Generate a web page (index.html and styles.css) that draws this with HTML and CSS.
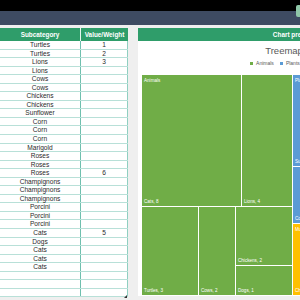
FILE: index.html
```html
<!DOCTYPE html>
<html>
<head>
<meta charset="utf-8">
<link rel="stylesheet" href="styles.css">
</head>
<body>
<div class="topbar"></div>
<div class="navbar"><div class="nav-btn"></div></div>
<div class="main">
  <div class="sheet">
    <div class="grid-head">
      <div class="c1">Subcategory</div>
      <div class="c2">Value/Weight</div>
    </div>
    <div class="grid-body">
      <div class="r"><div>Turtles</div><div>1</div></div>
      <div class="r"><div>Turtles</div><div>2</div></div>
      <div class="r"><div>Lions</div><div>3</div></div>
      <div class="r"><div>Lions</div><div></div></div>
      <div class="r"><div>Cows</div><div></div></div>
      <div class="r"><div>Cows</div><div></div></div>
      <div class="r"><div>Chickens</div><div></div></div>
      <div class="r"><div>Chickens</div><div></div></div>
      <div class="r"><div>Sunflower</div><div></div></div>
      <div class="r"><div>Corn</div><div></div></div>
      <div class="r"><div>Corn</div><div></div></div>
      <div class="r"><div>Corn</div><div></div></div>
      <div class="r"><div>Marigold</div><div></div></div>
      <div class="r"><div>Roses</div><div></div></div>
      <div class="r"><div>Roses</div><div></div></div>
      <div class="r"><div>Roses</div><div>6</div></div>
      <div class="r"><div>Champignons</div><div></div></div>
      <div class="r"><div>Champignons</div><div></div></div>
      <div class="r"><div>Champignons</div><div></div></div>
      <div class="r"><div>Porcini</div><div></div></div>
      <div class="r"><div>Porcini</div><div></div></div>
      <div class="r"><div>Porcini</div><div></div></div>
      <div class="r"><div>Cats</div><div>5</div></div>
      <div class="r"><div>Dogs</div><div></div></div>
      <div class="r"><div>Cats</div><div></div></div>
      <div class="r"><div>Cats</div><div></div></div>
      <div class="r"><div>Cats</div><div></div></div>
      <div class="r"><div></div><div></div></div>
      <div class="r"><div></div><div></div></div>
      <div class="r"><div></div><div></div></div>
    </div>
    <span class="resize"></span>
  </div>
  <div class="splitter"></div>
  <div class="panel">
    <div class="panel-head">Chart preview</div>
    <div class="panel-body">
      <div class="chart-title">Treemap Chart</div>
      <div class="legend">
        <span class="lg"><i class="sw sw-green"></i>Animals</span>
        <span class="lg"><i class="sw sw-blue"></i>Plants</span>
        <span class="lg"><i class="sw sw-yellow"></i>Mushrooms</span>
      </div>
      <div class="treemap">
        <div class="group animals">
          <div class="row top">
            <div class="tile cats"><span class="hdr">Animals</span><span class="lbl">Cats, 8</span></div>
            <div class="tile lions"><span class="lbl">Lions, 4</span></div>
          </div>
          <div class="row bottom">
            <div class="tile turtles"><span class="lbl">Turtles, 3</span></div>
            <div class="tile cows"><span class="lbl">Cows, 2</span></div>
            <div class="col">
              <div class="tile chickens"><span class="lbl">Chickens, 2</span></div>
              <div class="tile dogs"><span class="lbl">Dogs, 1</span></div>
            </div>
          </div>
        </div>
        <div class="group side">
          <div class="plants">
            <div class="tile blue roses"><span class="hdr">Plants</span><span class="lbl">Sunflower, 1</span></div>
            <div class="tile blue corn"><span class="lbl">Corn, 3</span></div>
          </div>
          <div class="tile yellow mush"><span class="hdr">Mushrooms</span><span class="lbl">Champignons, 3</span></div>
        </div>
      </div>
    </div>
  </div>
</div>
</body>
</html>
```
FILE: styles.css
```css
html, body {
  margin: 0;
  padding: 0;
}
body {
  width: 300px;
  height: 300px;
  overflow: hidden;
  background: #efefef;
  font-family: "Liberation Sans", Arial, sans-serif;
}
.topbar {
  height: 11px;
  background: #000;
}
.navbar {
  height: 14px;
  background: #3e4b62;
  position: relative;
}
.nav-btn {
  position: absolute;
  left: 296px;
  top: -6px;
  width: 20px;
  height: 12px;
  background: #8fc7a8;
  border-radius: 2px;
}
.main {
  display: flex;
  align-items: flex-start;
  padding-top: 3px;
}
.sheet {
  position: relative;
  width: 128px;
  flex: none;
  background: #fff;
}
.grid-head {
  display: grid;
  grid-template-columns: 81px 47px;
  height: 13px;
  background: #2f9d6a;
  color: #fff;
  font-size: 6.4px;
  font-weight: bold;
  line-height: 13px;
  text-align: center;
}
.grid-head .c1 {
  border-right: 1px solid #e8f5ef;
}
.grid-body {
  display: grid;
  grid-auto-rows: 8.55px;
}
.r {
  display: grid;
  grid-template-columns: 81px 47px;
  border-bottom: 1px solid #b8e0d8;
  font-size: 6.6px;
  line-height: 7.5px;
  color: #2a2a2a;
  text-align: center;
}
.r > div:first-child {
  border-right: 1px solid #6fbfae;
}
.r > div:last-child {
  border-right: 1px solid #8fcfc1;
}
.resize {
  position: absolute;
  right: 1px;
  bottom: -1px;
  width: 0;
  height: 0;
  border-left: 3px solid transparent;
  border-bottom: 3px solid #333;
}
.splitter {
  width: 1px;
  margin-left: 5px;
  margin-right: 5px;
  align-self: stretch;
  background: #e4e4e4;
}
.panel {
  width: 312px;
  flex: none;
  background: #fff;
}
.panel-head {
  height: 13px;
  background: #2f9d6a;
  color: #fff;
  font-size: 6.4px;
  font-weight: bold;
  line-height: 13px;
  text-align: center;
}
.panel-body {
  padding: 4px 4px 0 4px;
  height: 251px;
}
.chart-title {
  text-align: center;
  color: #595959;
  font-size: 9.5px;
  line-height: 12px;
  height: 14px;
  padding-left: 6px;
}
.legend {
  display: flex;
  justify-content: center;
  gap: 6px;
  font-size: 5px;
  color: #595959;
  height: 16px;
  line-height: 8px;
}
.lg {
  display: flex;
  align-items: center;
  gap: 3px;
  height: 8px;
}
.sw {
  display: block;
  width: 3px;
  height: 3px;
}
.sw-green { background: #70ad47; }
.sw-blue { background: #5b9bd5; }
.sw-yellow { background: #ffc000; }
.treemap {
  display: flex;
  gap: 1px;
  height: 220px;
  background: #fff;
}
.group {
  display: flex;
  flex-direction: column;
  gap: 1px;
}
.animals { width: 150px; }
.side { width: 60px; }
.row {
  display: flex;
  gap: 1px;
}
.row.top { height: 131px; }
.row.bottom { height: 88px; }
.col {
  display: flex;
  flex-direction: column;
  gap: 1px;
  width: 56px;
}
.tile {
  position: relative;
  background: #70ad47;
  color: #fff;
  font-size: 4.6px;
}
.cats { width: 99px; }
.lions { width: 50px; }
.turtles { width: 56px; }
.cows { width: 36px; }
.chickens { height: 58px; }
.dogs { height: 29px; }
.plants {
  display: flex;
  flex-direction: column;
  gap: 1px;
  height: 148px;
}
.blue { background: #5b9bd5; }
.roses { height: 91px; }
.corn { height: 56px; }
.yellow { background: #ffc000; }
.mush { height: 71px; }
.hdr {
  position: absolute;
  left: 2px;
  top: 3px;
}
.lbl {
  position: absolute;
  left: 2px;
  bottom: 2px;
  white-space: nowrap;
}
```
